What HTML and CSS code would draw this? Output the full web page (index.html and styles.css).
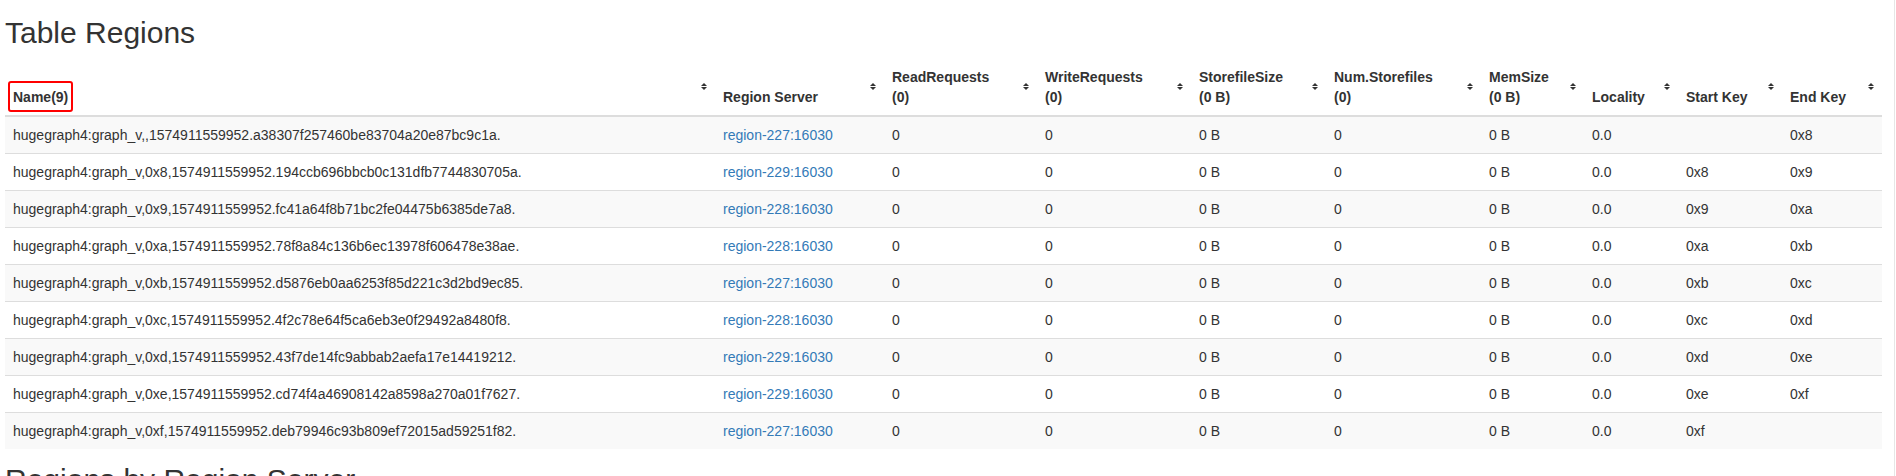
FILE: index.html
```html
<!DOCTYPE html>
<html>
<head>
<meta charset="utf-8">
<title>Table Regions</title>
<link rel="stylesheet" href="styles.css">
</head>
<body>
<div class="page">
  <h2 class="title">Table Regions</h2>
  <table class="regions">
    <colgroup>
      <col class="c-name"><col class="c-server"><col class="c-read"><col class="c-write"><col class="c-sfsize"><col class="c-sfnum"><col class="c-mem"><col class="c-loc"><col class="c-start"><col class="c-end">
    </colgroup>
    <thead>
      <tr>
        <th class="sortable"><span class="marked">Name(9)</span></th>
        <th class="sortable">Region Server</th>
        <th class="sortable">ReadRequests<br>(0)</th>
        <th class="sortable">WriteRequests<br>(0)</th>
        <th class="sortable">StorefileSize<br>(0 B)</th>
        <th class="sortable">Num.Storefiles<br>(0)</th>
        <th class="sortable">MemSize<br>(0 B)</th>
        <th class="sortable">Locality</th>
        <th class="sortable">Start Key</th>
        <th class="sortable">End Key</th>
      </tr>
    </thead>
    <tbody>
      <tr><td>hugegraph4:graph_v,,1574911559952.a38307f257460be83704a20e87bc9c1a.</td><td><a href="#">region-227:16030</a></td><td>0</td><td>0</td><td>0 B</td><td>0</td><td>0 B</td><td>0.0</td><td></td><td>0x8</td></tr>
      <tr><td>hugegraph4:graph_v,0x8,1574911559952.194ccb696bbcb0c131dfb7744830705a.</td><td><a href="#">region-229:16030</a></td><td>0</td><td>0</td><td>0 B</td><td>0</td><td>0 B</td><td>0.0</td><td>0x8</td><td>0x9</td></tr>
      <tr><td>hugegraph4:graph_v,0x9,1574911559952.fc41a64f8b71bc2fe04475b6385de7a8.</td><td><a href="#">region-228:16030</a></td><td>0</td><td>0</td><td>0 B</td><td>0</td><td>0 B</td><td>0.0</td><td>0x9</td><td>0xa</td></tr>
      <tr><td>hugegraph4:graph_v,0xa,1574911559952.78f8a84c136b6ec13978f606478e38ae.</td><td><a href="#">region-228:16030</a></td><td>0</td><td>0</td><td>0 B</td><td>0</td><td>0 B</td><td>0.0</td><td>0xa</td><td>0xb</td></tr>
      <tr><td>hugegraph4:graph_v,0xb,1574911559952.d5876eb0aa6253f85d221c3d2bd9ec85.</td><td><a href="#">region-227:16030</a></td><td>0</td><td>0</td><td>0 B</td><td>0</td><td>0 B</td><td>0.0</td><td>0xb</td><td>0xc</td></tr>
      <tr><td>hugegraph4:graph_v,0xc,1574911559952.4f2c78e64f5ca6eb3e0f29492a8480f8.</td><td><a href="#">region-228:16030</a></td><td>0</td><td>0</td><td>0 B</td><td>0</td><td>0 B</td><td>0.0</td><td>0xc</td><td>0xd</td></tr>
      <tr><td>hugegraph4:graph_v,0xd,1574911559952.43f7de14fc9abbab2aefa17e14419212.</td><td><a href="#">region-229:16030</a></td><td>0</td><td>0</td><td>0 B</td><td>0</td><td>0 B</td><td>0.0</td><td>0xd</td><td>0xe</td></tr>
      <tr><td>hugegraph4:graph_v,0xe,1574911559952.cd74f4a46908142a8598a270a01f7627.</td><td><a href="#">region-229:16030</a></td><td>0</td><td>0</td><td>0 B</td><td>0</td><td>0 B</td><td>0.0</td><td>0xe</td><td>0xf</td></tr>
      <tr><td>hugegraph4:graph_v,0xf,1574911559952.deb79946c93b809ef72015ad59251f82.</td><td><a href="#">region-227:16030</a></td><td>0</td><td>0</td><td>0 B</td><td>0</td><td>0 B</td><td>0.0</td><td>0xf</td><td></td></tr>
    </tbody>
  </table>
  <h2 class="title next">Regions by Region Server</h2>
</div>
</body>
</html>
```

FILE: styles.css
```css
html, body {
  margin: 0;
  padding: 0;
  background: #fff;
}

body {
  font-family: "Liberation Sans", Arial, sans-serif;
  font-size: 14px;
  line-height: 20px;
  color: #333;
}

.page {
  box-sizing: border-box;
  width: 1895px;
  min-height: 476px;
  padding: 0 12px 0 5px;
  border-right: 1px solid #e6e6e6;
  overflow: hidden;
}

.title {
  font-family: "Liberation Sans", Arial, sans-serif;
  font-size: 30px;
  font-weight: normal;
  line-height: 33px;
  color: #333;
  margin: 16px 0 10px;
}

.title.next {
  margin-top: 14px;
}

.regions {
  width: 100%;
  table-layout: fixed;
  border-collapse: collapse;
  border-spacing: 0;
  margin: 0;
}

.c-name { width: 710px; }
.c-server { width: 169px; }
.c-read { width: 153px; }
.c-write { width: 154px; }
.c-sfsize { width: 135px; }
.c-sfnum { width: 155px; }
.c-mem { width: 103px; }
.c-loc { width: 94px; }
.c-start { width: 104px; }
.c-end { width: 100px; }

.regions th,
.regions td {
  padding: 8px;
  text-align: left;
  white-space: nowrap;
  overflow: visible;
}

.regions th {
  font-weight: bold;
  vertical-align: bottom;
  border-bottom: 2px solid #ddd;
  position: relative;
}

.regions td {
  vertical-align: top;
  border-top: 1px solid #ddd;
}

.regions tbody tr:first-child td {
  border-top: 0;
}

.regions tbody tr:nth-child(odd) td {
  background: #f9f9f9;
}

.regions a {
  color: #337ab7;
  text-decoration: none;
}

/* sort arrows */
.sortable::before,
.sortable::after {
  content: "";
  position: absolute;
  right: 8px;
  width: 0;
  height: 0;
  border-left: 3.5px solid transparent;
  border-right: 3.5px solid transparent;
}

.sortable::before {
  top: calc(50% - 4px);
  border-bottom: 3px solid #333;
}

.sortable::after {
  top: calc(50% + 0px);
  border-top: 3px solid #333;
}

/* annotation box */
.marked {
  position: relative;
  display: inline-block;
  line-height: 20px;
}

.marked::after {
  content: "";
  position: absolute;
  left: -5px;
  right: -5px;
  top: -6px;
  bottom: -5px;
  border: 2px solid #f00;
  border-radius: 3px;
}
```
